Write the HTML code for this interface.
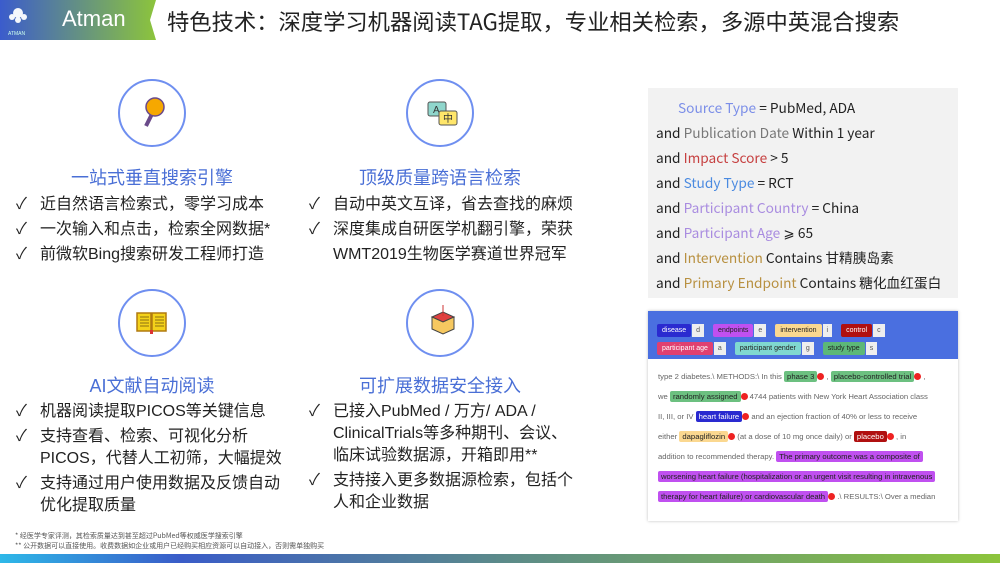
<!DOCTYPE html>
<html><head><meta charset="utf-8"><style>
*{margin:0;padding:0;box-sizing:border-box}
body{width:1000px;height:563px;position:relative;background:#fff;font-family:"Liberation Sans","Noto Sans CJK SC",sans-serif;overflow:hidden;color:#222}
.abs{position:absolute}
.circ{position:absolute;width:68px;height:68px;border:2px solid #6f8ff0;border-radius:50%}
.ttl{position:absolute;color:#4a6fd6;font-size:18px;text-align:center;width:260px}
.list{position:absolute;font-size:16px;line-height:25px;color:#222}
.list div{position:relative;padding-left:24px;white-space:nowrap}
.list div:before{content:"✓";position:absolute;left:0;top:0}
.q{position:absolute;left:648px;top:88px;width:310px;height:210px;background:#f2f2f2;padding:7px 0 0 8px;font-size:13.7px;line-height:25px;color:#222;font-family:"Noto Sans CJK SC",sans-serif}
.tg{display:inline-block;font-size:7px;padding:2px 5px;border-radius:2px;margin-right:1px;line-height:9px}
.k{display:inline-block;background:#eee;color:#555;font-size:7px;padding:2px 4px;line-height:9px;margin-right:9px}
.tx{font-size:7.7px;color:#666;line-height:20px;white-space:nowrap}
.h{padding:1px 3px;border-radius:2px;color:#222}
.m{display:inline-block;width:7px;height:7px;border-radius:50%;background:#e22;vertical-align:middle}
</style></head><body>
<svg class="abs" style="left:0;top:0" width="160" height="40"><defs><linearGradient id="g" x1="0" x2="1"><stop offset="0" stop-color="#3b5ccc"/><stop offset="1" stop-color="#8cc43c"/></linearGradient></defs><polygon points="0,0 156,0 150,20 156,40 0,40" fill="url(#g)"/>
<g fill="#fff" opacity=".95"><circle cx="18" cy="13" r="5"/><circle cx="12" cy="17" r="3"/><circle cx="24" cy="17" r="3"/><circle cx="18" cy="20" r="3"/></g>
<text x="8" y="35" fill="#cfe" font-size="5" font-family="Liberation Sans">ATMAN</text>
<text x="62" y="26" fill="#fff" font-size="22" font-family="Liberation Sans">Atman</text></svg>
<div class="abs" style="left:167px;top:5px;font-size:22.3px;font-family:'Noto Sans CJK SC',sans-serif;color:#222;white-space:nowrap">特色技术：深度学习机器阅读TAG提取，专业相关检索，多源中英混合搜索</div>

<div class="circ" style="left:118px;top:79px"></div>
<svg class="abs" style="left:138px;top:96px" width="30" height="36"><line x1="8" y1="30" x2="14" y2="18" stroke="#6a4a8a" stroke-width="4"/><circle cx="17" cy="11" r="9" fill="#f6a800" stroke="#6a4a8a" stroke-width="1.5"/></svg>
<div class="circ" style="left:406px;top:79px"></div>
<svg class="abs" style="left:426px;top:100px" width="34" height="30"><rect x="2" y="2" width="18" height="14" rx="2" fill="#8fd6cc" stroke="#555"/><text x="7" y="13" font-size="10" fill="#333">A</text><rect x="13" y="11" width="18" height="14" rx="2" fill="#ffe66a" stroke="#555"/><text x="17" y="22" font-size="10" fill="#333">中</text></svg>
<div class="circ" style="left:118px;top:289px"></div>
<svg class="abs" style="left:135px;top:310px" width="34" height="26"><path d="M2 3h14v18H2zM17 3h14v18H17z" fill="#f4d21a" stroke="#b07a10" stroke-width="1.5"/><path d="M5 7h9M5 10h9M5 13h9M5 16h9M20 7h9M20 10h9M20 13h9M20 16h9" stroke="#6a5010" stroke-width=".8"/><rect x="15" y="20" width="3" height="4" fill="#d33"/></svg>
<div class="circ" style="left:406px;top:289px"></div>
<svg class="abs" style="left:428px;top:305px" width="30" height="30"><path d="M4 12l11-5 11 5-11 5z" fill="#e04040" stroke="#444"/><path d="M4 12v12l11 5 11-5V12l-11 5z" fill="#f6c860" stroke="#444"/><line x1="15" y1="0" x2="15" y2="11" stroke="#c33"/></svg>

<div class="ttl" style="left:22px;top:164px">一站式垂直搜索引擎</div>
<div class="ttl" style="left:310px;top:164px">顶级质量跨语言检索</div>
<div class="ttl" style="left:22px;top:372px">AI文献自动阅读</div>
<div class="ttl" style="left:310px;top:372px">可扩展数据安全接入</div>

<div class="list" style="left:16px;top:192px"><div>近自然语言检索式，零学习成本</div><div>一次输入和点击，检索全网数据*</div><div>前微软Bing搜索研发工程师打造</div></div>
<div class="list" style="left:309px;top:192px"><div>自动中英文互译，省去查找的麻烦</div><div>深度集成自研医学机翻引擎，荣获<br>WMT2019生物医学赛道世界冠军</div></div>
<div class="list" style="left:16px;top:401px;line-height:22px"><div style="margin-bottom:3px">机器阅读提取PICOS等关键信息</div><div style="margin-bottom:3px">支持查看、检索、可视化分析<br>PICOS，代替人工初筛，大幅提效</div><div>支持通过用户使用数据及反馈自动<br>优化提取质量</div></div>
<div class="list" style="left:309px;top:401px;line-height:22px"><div style="margin-bottom:3px">已接入PubMed / 万方/ ADA /<br>ClinicalTrials等多种期刊、会议、<br>临床试验数据源，开箱即用**</div><div>支持接入更多数据源检索，包括个<br>人和企业数据</div></div>

<div class="q">
<div style="padding-left:22px"><span style="color:#7b8ee8">Source Type</span> = PubMed, ADA</div>
<div>and <span style="color:#777">Publication Date</span> Within 1 year</div>
<div>and <span style="color:#c64040">Impact Score</span> &gt; 5</div>
<div>and <span style="color:#4a8ae0">Study Type</span> = RCT</div>
<div>and <span style="color:#a98ce0">Participant Country</span> = China</div>
<div>and <span style="color:#a98ce0">Participant Age</span> ⩾ 65</div>
<div>and <span style="color:#b89040">Intervention</span> Contains 甘精胰岛素</div>
<div>and <span style="color:#b89040">Primary Endpoint</span> Contains 糖化血红蛋白</div>
</div>

<div class="abs" style="left:648px;top:311px;width:310px;height:210px;background:#fff;box-shadow:0 0 3px rgba(0,0,0,.25)">
<div style="background:#4a6fe0;height:48px;padding:8px 0 0 9px;line-height:17px">
<span class="tg" style="background:#2a2ad0;color:#fff">disease</span><span class="k">d</span><span class="tg" style="background:#c050f0">endpoints</span><span class="k">e</span><span class="tg" style="background:#fbd890">intervention</span><span class="k">i</span><span class="tg" style="background:#b01010;color:#fff">control</span><span class="k">c</span><br>
<span class="tg" style="background:#e04070;color:#fff">participant age</span><span class="k">a</span><span class="tg" style="background:#80d8d0">participant gender</span><span class="k">g</span><span class="tg" style="background:#5cb878">study type</span><span class="k">s</span>
</div>
<div class="tx" style="padding:8px 0 0 10px">
type 2 diabetes.\ METHODS:\ In this <span class="h" style="background:#6cc080">phase 3</span><span class="m"></span> , <span class="h" style="background:#6cc080">placebo-controlled trial</span><span class="m"></span> ,<br>
we <span class="h" style="background:#6cc080">randomly assigned</span><span class="m"></span> 4744 patients with New York Heart Association class<br>
II, III, or IV <span class="h" style="background:#2a2ad0;color:#fff">heart failure</span><span class="m"></span> and an ejection fraction of 40% or less to receive<br>
either <span class="h" style="background:#fbd890">dapagliflozin</span><span class="m"></span> (at a dose of 10 mg once daily) or <span class="h" style="background:#b01010;color:#fff">placebo</span><span class="m"></span> , in<br>
addition to recommended therapy. <span class="h" style="background:#c050f0">The primary outcome was a composite of</span><br>
<span class="h" style="background:#c050f0">worsening heart failure (hospitalization or an urgent visit resulting in intravenous</span><br>
<span class="h" style="background:#c050f0">therapy for heart failure) or cardiovascular death</span><span class="m"></span> .\ RESULTS:\ Over a median
</div></div>

<div class="abs" style="left:15px;top:531px;font-size:7px;color:#555;line-height:10px;font-family:'Noto Sans CJK SC',sans-serif">* 经医学专家评测，其检索质量达到甚至超过PubMed等权威医学搜索引擎<br>** 公开数据可以直接使用。收费数据如企业或用户已经购买相应资源可以自动接入，否则需单独购买</div>
<div class="abs" style="left:0;top:554px;width:1000px;height:9px;background:linear-gradient(90deg,#2eb8e8 0%,#3a5cc8 18%,#5b8a8a 50%,#8cc43c 100%)"></div>
</body></html>
